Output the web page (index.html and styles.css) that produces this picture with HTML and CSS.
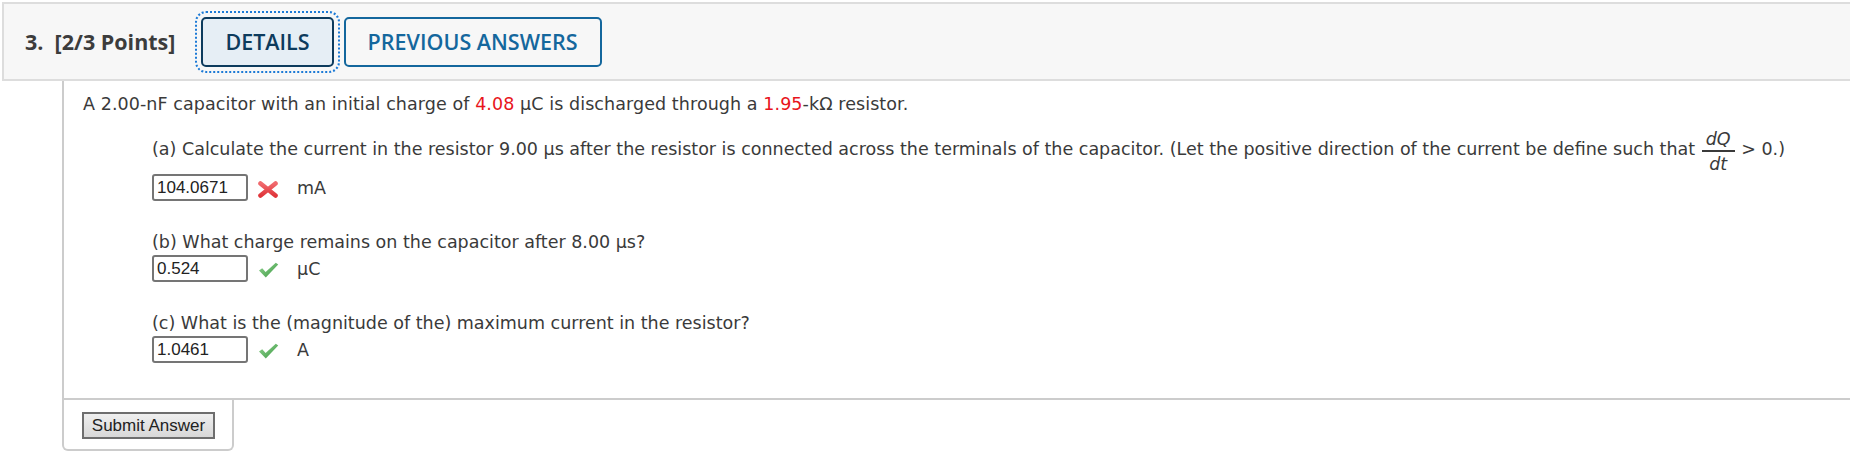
FILE: index.html
```html
<!DOCTYPE html>
<html lang="en">
<head>
<meta charset="utf-8">
<title>Question 3</title>
<link rel="stylesheet" href="styles.css">
</head>
<body>
<div class="question">
  <div class="qhead">
    <span class="qnum">3.&nbsp; [2/3 Points]</span>
    <div class="tabs">
      <button class="tab tab-active" type="button">DETAILS</button>
      <button class="tab" type="button">PREVIOUS ANSWERS</button>
    </div>
  </div>
  <div class="qbody">
    <div class="main">
      <p class="intro">A 2.00-nF capacitor with an initial charge of <span class="red">4.08</span> μC is discharged through a <span class="red">1.95</span>-kΩ resistor.</p>
      <div class="part part-a">
        <p class="q q-frac">(a) Calculate the current in the resistor 9.00 μs after the resistor is connected across the terminals of the capacitor. (Let the positive direction of the current be define such that <span class="frac"><span class="num">dQ</span><span class="den">dt</span></span> &gt; 0.)</p>
        <div class="ans">
          <input class="field" type="text" value="104.0671">
          <span class="mark">
            <svg width="20" height="17" viewBox="0 0 20 17"><defs><linearGradient id="rg" x1="0" y1="0" x2="0" y2="1"><stop offset="0" stop-color="#f06a6e"/><stop offset="1" stop-color="#e0363b"/></linearGradient></defs><path d="M2.5 2.5 L17.5 14.5 M17.5 2.5 L2.5 14.5" stroke="url(#rg)" stroke-width="4.6" stroke-linecap="round" fill="none"/></svg>
          </span>
          <span class="unit">mA</span>
        </div>
      </div>
      <div class="part">
        <p class="q">(b) What charge remains on the capacitor after 8.00 μs?</p>
        <div class="ans">
          <input class="field" type="text" value="0.524">
          <span class="mark">
            <svg width="21" height="16" viewBox="0 0 21 16"><defs><linearGradient id="gg" x1="0" y1="0" x2="1" y2="1"><stop offset="0" stop-color="#8fd18f"/><stop offset="1" stop-color="#3f9c45"/></linearGradient></defs><path d="M1 8.5 L4.2 6.3 L7.6 10 L17.8 0.8 L20.2 2.6 L7.8 15.4 Z" fill="url(#gg)"/></svg>
          </span>
          <span class="unit">μC</span>
        </div>
      </div>
      <div class="part">
        <p class="q">(c) What is the (magnitude of the) maximum current in the resistor?</p>
        <div class="ans">
          <input class="field" type="text" value="1.0461">
          <span class="mark">
            <svg width="21" height="16" viewBox="0 0 21 16"><defs><linearGradient id="gg2" x1="0" y1="0" x2="1" y2="1"><stop offset="0" stop-color="#8fd18f"/><stop offset="1" stop-color="#3f9c45"/></linearGradient></defs><path d="M1 8.5 L4.2 6.3 L7.6 10 L17.8 0.8 L20.2 2.6 L7.8 15.4 Z" fill="url(#gg2)"/></svg>
          </span>
          <span class="unit">A</span>
        </div>
      </div>
    </div>
    <div class="submit-box">
      <button class="submit" type="button">Submit Answer</button>
    </div>
  </div>
</div>
</body>
</html>
```
FILE: styles.css
```css
html, body {
  margin: 0;
  padding: 0;
  background: #ffffff;
  overflow: hidden;
}

.question {
  font-family: "DejaVu Sans", sans-serif;
  color: #3a3a3a;
}

.qhead {
  margin: 2px 0 0 2px;
  height: 75px;
  border: 2px solid #dddddd;
  border-right: 0;
  background: #f7f7f7;
  display: flex;
  align-items: center;
  padding-left: 21px;
}

.qnum {
  font-family: "Open Sans", sans-serif;
  font-weight: 700;
  font-size: 21.5px;
  color: #3c3c3c;
  margin-right: 26px;
  white-space: pre;
}

.tabs {
  display: flex;
  gap: 10px;
}

.tab {
  font-family: "Open Sans", sans-serif;
  font-weight: 600;
  font-size: 21.5px;
  height: 50px;
  padding: 0 22px;
  border: 2px solid #14679d;
  border-radius: 5px;
  background: transparent;
  color: #14679d;
  cursor: pointer;
}

.tab-active {
  background: #e6eef5;
  border-color: #0d3b5d;
  color: #0d3b5d;
  outline: 2px dotted #1c7ad6;
  outline-offset: 4px;
}

.qbody {
  margin-left: 62px;
}

.main {
  border-left: 2px solid #cccccc;
  border-bottom: 2px solid #cccccc;
  padding: 12px 0 35px 19px;
  font-size: 17.5px;
}

.main p {
  margin: 0;
}

.intro {
  line-height: 22px;
  white-space: nowrap;
  letter-spacing: 0.08px;
}

.red {
  color: #e8141c;
}

.part {
  margin-left: 69px;
  margin-top: 30px;
}

.part-a {
  margin-top: 13px;
}

.q {
  line-height: 22px;
  white-space: nowrap;
}

.q-frac {
  line-height: 40px;
  height: 40px;
}

.frac {
  display: inline-flex;
  flex-direction: column;
  align-items: center;
  vertical-align: middle;
  font-style: italic;
  line-height: 19px;
  width: 33px;
  margin: 0 1px;
  position: relative;
  top: 2px;
}

.frac .num {
  width: 100%;
  text-align: center;
  border-bottom: 2px solid #3a3a3a;
  padding-bottom: 1px;
}

.frac .den {
  padding-top: 3px;
}

.ans {
  display: flex;
  align-items: center;
  margin-top: 2px;
  height: 27px;
}

.part-a .ans {
  margin-top: 6px;
}

.field {
  box-sizing: border-box;
  width: 96px;
  height: 27px;
  margin: 0;
  border: 2px solid #757575;
  border-radius: 3px;
  padding: 0 3px;
  font-family: "Liberation Sans", Arial, sans-serif;
  font-size: 17px;
  color: #222222;
  background: #ffffff;
}

.mark {
  display: flex;
  align-items: center;
  justify-content: center;
  width: 24px;
  margin-left: 8px;
  height: 27px;
  padding-top: 3px;
  box-sizing: border-box;
}

.unit {
  margin-left: 17px;
  font-size: 17.5px;
}

.submit-box {
  width: 172px;
  border: 2px solid #cccccc;
  border-top: 0;
  border-radius: 0 0 6px 6px;
  padding: 12px 0 10px 18px;
  box-sizing: border-box;
  height: 51px;
}

.submit {
  box-sizing: border-box;
  width: 133px;
  height: 27px;
  padding: 0;
  border: 2px solid #6e6e6e;
  background: linear-gradient(#efefef, #d8d8d8);
  font-family: "Liberation Sans", Arial, sans-serif;
  font-size: 17px;
  color: #222222;
  border-radius: 0;
}
```
